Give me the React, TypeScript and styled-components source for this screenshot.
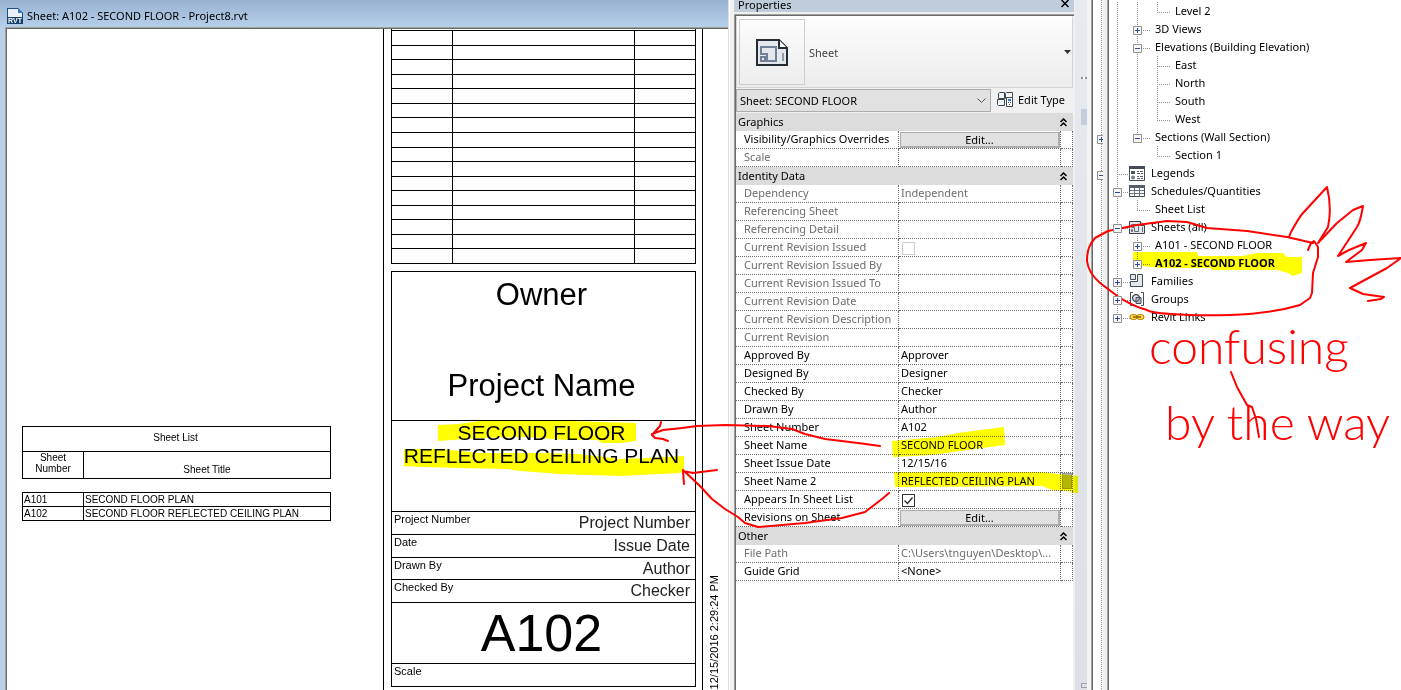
import React from 'react';
import styled, { createGlobalStyle, css } from 'styled-components';

const GlobalStyle = createGlobalStyle`
  *, *::before, *::after { box-sizing: border-box; }
  body {
    margin: 0;
    background: #f0f0f0;
    color: #000;
    font-family: "Noto Sans", "Open Sans", sans-serif;
    font-size: 11px;
    line-height: 18px;
  }
  button, select, input { font: inherit; color: inherit; margin: 0; }
`;

const drawingFont = '"Liberation Sans", Arial, sans-serif';

const dotsDown = 'repeating-linear-gradient(to bottom, #8c8c8c 0 1px, transparent 1px 2px)';
const dotsAcross = 'repeating-linear-gradient(to right, #8c8c8c 0 1px, transparent 1px 2px)';

/* ---------- shell ---------- */

const Workspace = styled.main`
  position: relative;
  display: flex;
  height: 100vh;
  min-width: 1100px;
  overflow: hidden;
`;

/* ---------- sheet view window ---------- */

const ViewWindow = styled.section`
  flex: 1;
  min-width: 0;
  display: flex;
  flex-direction: column;
  background: #bad0e9;
`;

const TitleBar = styled.header`
  display: flex;
  align-items: center;
  gap: 4px;
  height: 27px;
  flex: none;
  padding: 4px 0 0 7px;
  background: linear-gradient(#98b2d0, #b6cfea);
`;

const WindowTitle = styled.h1`
  margin: 0;
  font-size: 11px;
  font-weight: 400;
`;

const Canvas = styled.div`
  flex: 1;
  display: flex;
  margin-left: 5px;
  border: solid #a0a0a0;
  border-width: 1px 0 0 1px;
  box-shadow: inset 1px 1px #696969;
  padding: 1px 0 0 1px;
  background: #fff;
  font-family: ${drawingFont};
  overflow: hidden;
`;

const ScheduleArea = styled.div`
  flex: 1;
  min-width: 0;
  padding: 397px 0 0 15px;
`;

const Schedule = styled.table`
  width: 309px;
  margin-bottom: 13px;
  border-collapse: collapse;
  table-layout: fixed;
  font-size: 10px;
  line-height: 11px;
  th, td { border: 1px solid #000; font-weight: 400; }
`;

const TitleCell = styled.th`
  height: 25px;
  padding: 0 2px 3px 0;
`;

const HeadCell = styled.th`
  height: 27px;
  padding: 0 4px;
  vertical-align: ${(p: { $low?: boolean }) => (p.$low ? 'bottom' : 'top')};
  padding-bottom: ${(p: { $low?: boolean }) => (p.$low ? '3px' : '0')};
`;

const DataCell = styled.td`
  height: 14px;
  padding: 0 1px 1px;
`;

const SheetBorder = styled.div`
  width: 320px;
  flex: none;
  padding: 0 6px 0 7px;
  border: solid #000;
  border-width: 0 1px;
`;

const RevisionGrid = styled.div`
  display: flex;
  flex-direction: column;
  height: 235px;
  margin-bottom: 7px;
  padding-top: 1px;
  border: solid #000;
  border-width: 0 1px 1px;
`;

const RevisionRow = styled.div`
  flex: 1;
  display: grid;
  grid-template-columns: 60px 1fr 60px;
  border-top: 1px solid #000;
  span:nth-child(2) { border: solid #000; border-width: 0 1px; }
`;

const TitleBlock = styled.div`
  border: solid #000;
  border-width: 1px 1px 0;
`;

const blockCell = css`
  border-bottom: 1px solid #000;
`;

const ProjectCell = styled.div`
  ${blockCell}
  display: flex;
  flex-direction: column;
  align-items: center;
  justify-content: space-between;
  height: 149px;
  padding: 5px 4px 16px 0;
  font-size: 31px;
  line-height: 36px;
`;

const SheetNameCell = styled.div`
  ${blockCell}
  height: 91px;
  padding-right: 4px;
  font-size: 21px;
  line-height: 23px;
  text-align: center;
`;

const FieldStack = styled.div`
  display: flex;
  flex-direction: column;
  height: 91px;
`;

const FieldCell = styled.div`
  ${blockCell}
  flex: 1;
  display: flex;
  justify-content: space-between;
  min-height: 22px;
  padding: 0 5px 0 2px;
  font-size: 11px;
  line-height: 15px;
  span { font-size: 16px; line-height: 22px; color: #222; }
`;

const NumberCell = styled.div`
  ${blockCell}
  height: 61px;
  padding-right: 4px;
  font-size: 52px;
  line-height: 60px;
  text-align: center;
`;

const ScaleCell = styled.div`
  ${blockCell}
  height: 23px;
  padding-left: 2px;
  font-size: 11px;
  line-height: 15px;
`;

const PlotStamp = styled.div`
  width: 25px;
  flex: none;
  display: flex;
  align-items: flex-end;
  padding: 0 0 1px 4px;
  time {
    writing-mode: vertical-rl;
    rotate: 180deg;
    font-size: 11px;
    line-height: 14px;
    white-space: nowrap;
  }
`;

/* ---------- properties palette ---------- */

const Palette = styled.section`
  width: 347px;
  flex: none;
  display: flex;
  flex-direction: column;
  padding: 0 1px 0 5px;
  border-left: 1px solid #dcdcdc;
  box-shadow: inset 1px 0 #fff;
  background: #f0f0f0;
`;

const PaletteBar = styled.header`
  display: flex;
  justify-content: space-between;
  align-items: flex-end;
  height: 12px;
  flex: none;
  margin-bottom: 2px;
  padding: 0 5px 0 4px;
  background: #bfcddb;
  h2 { margin: 0; font-size: 11px; line-height: 15px; font-weight: 400; }
`;

const CloseButton = styled.button`
  display: flex;
  padding: 0;
  border: 0;
  background: none;
`;

const PaletteBody = styled.div`
  flex: 1;
  border: solid #a0a0a0;
  border-width: 1px 0 0 1px;
  box-shadow: inset 1px 1px #696969;
  padding: 1px 1px 0 1px;
`;

const TypeSelector = styled.button`
  display: flex;
  align-items: center;
  gap: 4px;
  width: 100%;
  height: 72px;
  padding: 0 1px 0 2px;
  border: 1px solid #d4d4d4;
  border-top-color: #fff;
  background: linear-gradient(#fdfdfd, #ececec);
  color: #444;
  text-align: left;
  strong { flex: 1; padding-top: 2px; font-weight: 400; }
`;

const Thumb = styled.span`
  display: flex;
  align-items: center;
  justify-content: center;
  width: 66px;
  height: 66px;
  border: 1px solid #cdcdcd;
`;

const InstanceBar = styled.div`
  display: flex;
  align-items: center;
  gap: 6px;
  height: 25px;
`;

const InstanceField = styled.div`
  position: relative;
  width: 255px;
  svg { position: absolute; right: 5px; top: 9px; pointer-events: none; }
`;

const InstanceSelect = styled.select`
  appearance: none;
  width: 100%;
  height: 23px;
  padding: 0 20px 0 3px;
  border: 1px solid #adadad;
  border-radius: 0;
  background: #e1e1e1;
`;

const EditTypeButton = styled.button`
  display: flex;
  align-items: center;
  align-self: flex-start;
  gap: 4px;
  height: 23px;
  padding: 0;
  border: 0;
  background: none;
  white-space: nowrap;
`;

const GridArea = styled.div`
  height: 100%;
  background: #fff;
`;

const PropertyGrid = styled.table`
  width: 337px;
  table-layout: fixed;
  border-collapse: separate;
  border-spacing: 0;
  td, th { padding: 0; height: 18px; line-height: 16px; font-weight: 400; text-align: left; white-space: nowrap; }
`;

const GroupHead = styled.th`
  background: #dcdcdc;
  div { display: flex; justify-content: space-between; align-items: center; padding: 0 6px 0 2px; }
  button { display: flex; padding: 0; border: 0; background: none; }
`;

const PropertyRow = styled.tr<{ $dim?: boolean }>`
  color: ${(p) => (p.$dim ? '#6d6d6d' : '#000')};
  td, th { border: dotted #6d6d6d; border-width: 0 1px 1px 0; vertical-align: top; }
  th { padding-left: 8px; }
  td { padding-left: 2px; }
`;

const ButtonCell = styled.td`
  && { padding: 1px 0 0 1px; }
`;

const EditButton = styled.button`
  display: block;
  width: 100%;
  height: 16px;
  padding: 0;
  border: 1px solid #adadad;
  border-width: 1px 2px 2px 1px;
  background: #e1e1e1;
  line-height: 13px;
`;

const MiniButton = styled.button`
  display: block;
  width: 10px;
  height: 16px;
  margin-left: -1px;
  padding: 0;
  border: 1px solid #999;
  background: #b4b4b4;
`;

const Tick = styled.input`
  appearance: none;
  display: block;
  width: 13px;
  height: 13px;
  margin: 3px 0 0 1px;
  border: 1px solid #333;
  background: #fff;
  &:disabled { border-color: #ccc; }
  &:checked {
    background: url("data:image/svg+xml,%3Csvg xmlns='http://www.w3.org/2000/svg' viewBox='0 0 11 11'%3E%3Cpath d='M1.5 5.5l3 3 5-6' fill='none' stroke='%23222' stroke-width='1.2'/%3E%3C/svg%3E");
  }
`;

/* ---------- splitter and clipped pane ---------- */

const Splitter = styled.div`
  display: flex;
  flex-direction: column;
  align-items: flex-end;
  width: 16px;
  flex: none;
  padding: 77px 0 2px;
  border-right: 4px solid #f4f4f4;
  background: linear-gradient(#e7eaef, #dfe3e9 60%, #dde1e7);
`;

const Dashes = styled.i`
  width: 6px;
  height: 2px;
  margin-bottom: 30px;
  background: repeating-linear-gradient(to right, #909090 0 2px, #fff 2px 4px);
`;

const Thumbnail = styled.i`
  width: 6px;
  height: 16px;
  margin-bottom: auto;
  background: #c5cfdc;
`;

const Grip = styled.i`
  width: 6px;
  height: 5px;
  border: 1px solid #98a0aa;
  border-right: 0;
`;

const ClippedPane = styled.div`
  width: 16px;
  flex: none;
  display: flex;
  flex-direction: column;
  align-items: flex-end;
  gap: 27px;
  padding: 135px 4px 0 0;
  border: solid #a0a0a0;
  border-width: 0 0 0 1px;
  background: ${dotsDown} 9px 0 / 1px 100% no-repeat, linear-gradient(to right, #696969 1px, #fff 1px 11px, #f0f0f0 11px);
  span { width: 6px; height: 9px; overflow: hidden; }
  svg { display: block; }
`;

/* ---------- project browser ---------- */

const Browser = styled.aside`
  width: 294px;
  flex: none;
  border: solid #a0a0a0;
  border-width: 0 0 0 1px;
  box-shadow: inset 1px 0 #696969;
  padding: 2px 0 0 1px;
  background: #fff;
`;

const Tree = styled.ul`
  margin: 0;
  padding: 0;
  list-style: none;
`;

const TreeRow = styled.li<{ $bold?: boolean }>`
  display: flex;
  height: 18px;
  white-space: nowrap;
  font-weight: ${(p) => (p.$bold ? 700 : 400)};
  > svg { flex: none; margin-top: 1px; background: #fff; }
  > b { font-weight: inherit; padding-left: 6px; }
`;

type GuideKind = 'none' | 'line' | 'tee' | 'end';

const Guide = styled.span<{ $kind: GuideKind }>`
  position: relative;
  width: 20px;
  flex: none;
  background: ${(p) =>
    p.$kind === 'none'
      ? 'none'
      : p.$kind === 'end'
      ? `${dotsDown} 8px 0 / 1px 10px no-repeat`
      : `${dotsDown} 8px 0 / 1px 100% no-repeat`};
  &::after {
    content: '';
    display: ${(p) => (p.$kind === 'tee' || p.$kind === 'end' ? 'block' : 'none')};
    position: absolute;
    left: 8px;
    top: 10px;
    width: 14px;
    height: 1px;
    background: ${dotsAcross};
  }
  svg { position: absolute; z-index: 1; left: 4px; top: 6px; }
`;

const Remarks = styled.div`
  display: flex;
  flex-direction: column;
  gap: 36px;
  color: #f00;
  font-family: Lato, sans-serif;
  font-weight: 300;
  font-size: 48px;
  line-height: 40px;
  white-space: nowrap;
  p { margin: 0; padding-left: 40px; }
  p + p { padding-left: 56px; }
`;

const Markup = styled.svg<{ $blend?: boolean }>`
  position: absolute;
  top: 0;
  right: 0;
  width: 1024px;
  height: 690px;
  pointer-events: none;
  mix-blend-mode: ${(p) => (p.$blend ? 'multiply' : 'normal')};
`;

/* ---------- icons ---------- */

const RvtIcon = () => (
  <svg width="16" height="16" viewBox="0 0 16 16" aria-hidden="true">
    <path d="M0 0h11l5 5v11H0z" fill="#1c4f8c" />
    <path d="M1 1h10v4h4v4H1z" fill="#e9eff7" />
    <path d="M11 0l5 5h-5z" fill="#2f7cc4" />
    <path d="M0 9h16v7H0z" fill="#17406f" />
    <text x="8" y="15" fontSize="7" fontWeight="700" fontFamily="Liberation Sans" fill="#fff" textAnchor="middle">RVT</text>
  </svg>
);

const SheetIconLarge = () => (
  <svg width="32" height="32" viewBox="0 0 32 32" aria-hidden="true">
    <path d="M1 4h22l8 8v17H1z" fill="#e4e8ec" stroke="#262c33" strokeWidth="2" />
    <path d="M23 4v8h8" fill="#fff" stroke="#262c33" strokeWidth="2" />
    <path d="M5 17v-6h15v14h-9v-7H4M5 21h4v4H5z" fill="none" stroke="#718096" strokeWidth="2" />
    <path d="M27 17v8" stroke="#9199a3" strokeWidth="2" />
  </svg>
);

const SheetIcon = () => (
  <svg width="16" height="16" viewBox="0 0 16 16" fill="none" aria-hidden="true">
    <path d="M.5 2.500h11l4 4v8H.5z" fill="#e4e8ec" stroke="#3a414c" />
    <path d="M11.500 2.500v4h4" fill="#fff" stroke="#3a414c" />
    <path d="M2.500 8V5.500h7v7h-4V8.500h-3M2.500 10.500h1v2h-1z" stroke="#5f6c80" />
    <path d="M13.500 8v5" stroke="#5f6c80" />
  </svg>
);

const EditTypeIcon = () => (
  <svg width="17" height="17" viewBox="0 0 17 17" fill="#f4f6f8" stroke="#3d4654" aria-hidden="true">
    <path d="M1.500 2.500l1-1h5v6h-6zM8.500 2.500l1-1h6v6h-7zM.5 8.500h7v6h-6l-1-1z" />
    <path d="M9.500 6.500h6v9h-6z" fill="#fff" />
    <path d="M11 9h3" stroke="#2c6fbf" strokeWidth="2" />
    <path d="M11 11.500h1M13 11.500h1M12 13.500h1" />
  </svg>
);

const LegendIcon = () => (
  <svg width="16" height="16" viewBox="0 0 16 16" aria-hidden="true">
    <path d="M.5 1.500h15v14H.5z" fill="#fff" stroke="#444b57" />
    <path d="M0 1h16v3H0z" fill="#444b57" />
    <path d="M2 6h4v3H2z" fill="#4c5666" />
    <circle cx="4" cy="12.500" r="2" fill="#77808d" />
    <path d="M8 6.500h2m1 0h3M8 8.500h3m1 0h2M8 11.500h2m1 0h3M8 13.500h3m1 0h2" stroke="#555e6c" />
  </svg>
);

const ScheduleIcon = () => (
  <svg width="16" height="16" viewBox="0 0 16 16" aria-hidden="true">
    <path d="M.5 2.500h15v11H.5z" fill="#fff" stroke="#444b57" />
    <path d="M0 2h16v3H0z" fill="#555e6c" />
    <path d="M1 7.500h14M1 10.500h14M5.500 5v8M10.500 5v8" stroke="#6a7380" />
  </svg>
);

const FamilyIcon = () => (
  <svg width="16" height="16" viewBox="0 0 16 16" fill="#e4e8ee" stroke="#444b57" aria-hidden="true">
    <path d="M1.500 1.500h5v5h-5zM8.500 1.500h5v12h-12v-5h7z" />
  </svg>
);

const GroupIcon = () => (
  <svg width="16" height="16" viewBox="0 0 16 16" fill="none" stroke="#444b57" aria-hidden="true">
    <path d="M4 1.500H1.500v13H4M12 1.500h2.500v13H12" />
    <circle cx="7" cy="7" r="3.500" fill="#dfe4ea" />
    <path d="M7 6.500h5v6H7z" fill="#b9c1cc" />
    <circle cx="7" cy="7" r="3.500" />
  </svg>
);

const LinkIcon = () => (
  <svg width="16" height="16" viewBox="0 0 16 16" fill="none" stroke="#b57e00" aria-hidden="true">
    <rect x="1" y="5.500" width="7" height="5" rx="2.500" fill="#ffd84a" />
    <rect x="8" y="5.500" width="7" height="5" rx="2.500" fill="#ffd84a" />
    <path d="M4 8h8" stroke="#8d6100" strokeWidth="1.500" />
  </svg>
);

const Expander = ({ open }: { open?: boolean }) => (
  <svg width="9" height="9" viewBox="0 0 9 9" aria-hidden="true">
    <path d="M.5.5h8v8h-8z" fill="#f6f6f6" stroke="#919191" />
    <path d={open ? 'M2 4.500h5' : 'M2 4.500h5M4.500 2v5'} stroke="#31479c" />
  </svg>
);

const Collapse = () => (
  <svg width="7" height="9" viewBox="0 0 7 9" fill="none" stroke="#000" strokeWidth="1.500" aria-hidden="true">
    <path d="M.5 4l3-3 3 3M.5 8l3-3 3 3" />
  </svg>
);

/* ---------- data ---------- */

type Prop = {
  name: string;
  value?: string;
  dim?: boolean;
  kind?: 'button' | 'check' | 'browse';
  checked?: boolean;
};

const groups: { title: string; rows: Prop[] }[] = [
  {
    title: 'Graphics',
    rows: [
      { name: 'Visibility/Graphics Overrides', kind: 'button' },
      { name: 'Scale', dim: true },
    ],
  },
  {
    title: 'Identity Data',
    rows: [
      { name: 'Dependency', value: 'Independent', dim: true },
      { name: 'Referencing Sheet', dim: true },
      { name: 'Referencing Detail', dim: true },
      { name: 'Current Revision Issued', kind: 'check', dim: true },
      { name: 'Current Revision Issued By', dim: true },
      { name: 'Current Revision Issued To', dim: true },
      { name: 'Current Revision Date', dim: true },
      { name: 'Current Revision Description', dim: true },
      { name: 'Current Revision', dim: true },
      { name: 'Approved By', value: 'Approver' },
      { name: 'Designed By', value: 'Designer' },
      { name: 'Checked By', value: 'Checker' },
      { name: 'Drawn By', value: 'Author' },
      { name: 'Sheet Number', value: 'A102' },
      { name: 'Sheet Name', value: 'SECOND FLOOR' },
      { name: 'Sheet Issue Date', value: '12/15/16' },
      { name: 'Sheet Name 2', value: 'REFLECTED CEILING PLAN', kind: 'browse' },
      { name: 'Appears In Sheet List', kind: 'check', checked: true },
      { name: 'Revisions on Sheet', kind: 'button' },
    ],
  },
  {
    title: 'Other',
    rows: [
      { name: 'File Path', value: 'C:\\Users\\tnguyen\\Desktop\\...', dim: true },
      { name: 'Guide Grid', value: '<None>' },
    ],
  },
];

type Node = {
  label: string;
  guides: GuideKind[];
  open?: boolean;
  icon?: React.ReactNode;
  bold?: boolean;
};

const nodes: Node[] = [
  { label: 'Level 2', guides: ['line', 'line', 'end'] },
  { label: '3D Views', guides: ['line', 'tee'], open: false },
  { label: 'Elevations (Building Elevation)', guides: ['line', 'tee'], open: true },
  { label: 'East', guides: ['line', 'line', 'tee'] },
  { label: 'North', guides: ['line', 'line', 'tee'] },
  { label: 'South', guides: ['line', 'line', 'tee'] },
  { label: 'West', guides: ['line', 'line', 'end'] },
  { label: 'Sections (Wall Section)', guides: ['line', 'end'], open: true },
  { label: 'Section 1', guides: ['line', 'none', 'end'] },
  { label: 'Legends', guides: ['tee'], icon: <LegendIcon /> },
  { label: 'Schedules/Quantities', guides: ['tee'], open: true, icon: <ScheduleIcon /> },
  { label: 'Sheet List', guides: ['line', 'end'] },
  { label: 'Sheets (all)', guides: ['tee'], open: true, icon: <SheetIcon /> },
  { label: 'A101 - SECOND FLOOR', guides: ['line', 'tee'], open: false },
  { label: 'A102 - SECOND FLOOR', guides: ['line', 'end'], open: false, bold: true },
  { label: 'Families', guides: ['tee'], open: false, icon: <FamilyIcon /> },
  { label: 'Groups', guides: ['tee'], open: false, icon: <GroupIcon /> },
  { label: 'Revit Links', guides: ['end'], open: false, icon: <LinkIcon /> },
];

const titleFields = [
  ['Project Number', 'Project Number'],
  ['Date', 'Issue Date'],
  ['Drawn By', 'Author'],
  ['Checked By', 'Checker'],
];

/* ---------- parts ---------- */

const SheetView = () => (
  <ViewWindow>
    <TitleBar>
      <RvtIcon />
      <WindowTitle>Sheet: A102 - SECOND FLOOR - Project8.rvt</WindowTitle>
    </TitleBar>
    <Canvas>
      <ScheduleArea>
        <Schedule>
          <colgroup><col width="61" /><col /></colgroup>
          <thead>
            <tr><TitleCell colSpan={2}>Sheet List</TitleCell></tr>
            <tr>
              <HeadCell>Sheet Number</HeadCell>
              <HeadCell $low>Sheet Title</HeadCell>
            </tr>
          </thead>
        </Schedule>
        <Schedule>
          <colgroup><col width="61" /><col /></colgroup>
          <tbody>
            <tr><DataCell>A101</DataCell><DataCell>SECOND FLOOR PLAN</DataCell></tr>
            <tr><DataCell>A102</DataCell><DataCell>SECOND FLOOR REFLECTED CEILING PLAN</DataCell></tr>
          </tbody>
        </Schedule>
      </ScheduleArea>
      <SheetBorder>
        <RevisionGrid>
          {Array.from({ length: 16 }, (_, i) => (
            <RevisionRow key={i}><span /><span /><span /></RevisionRow>
          ))}
        </RevisionGrid>
        <TitleBlock>
          <ProjectCell><span>Owner</span><span>Project Name</span></ProjectCell>
          <SheetNameCell>SECOND FLOOR<br />REFLECTED CEILING PLAN</SheetNameCell>
          <FieldStack>
            {titleFields.map(([label, value]) => (
              <FieldCell key={label}>{label}<span>{value}</span></FieldCell>
            ))}
          </FieldStack>
          <NumberCell>A102</NumberCell>
          <ScaleCell>Scale</ScaleCell>
        </TitleBlock>
      </SheetBorder>
      <PlotStamp><time>12/15/2016 2:29:24 PM</time></PlotStamp>
    </Canvas>
  </ViewWindow>
);

const PropertyLine = ({ row }: { row: Prop }) => {
  const id = row.name.replace(/\W+/g, '-').toLowerCase();
  return (
    <PropertyRow $dim={row.dim}>
      <th scope="row">{row.kind === 'check' ? <label htmlFor={id}>{row.name}</label> : row.name}</th>
      {row.kind === 'button' ? (
        <ButtonCell><EditButton aria-label={`Edit ${row.name}`}>Edit...</EditButton></ButtonCell>
      ) : (
        <td>
          {row.kind === 'check' ? (
            <Tick type="checkbox" id={id} defaultChecked={row.checked} disabled={row.dim} />
          ) : (
            row.value
          )}
        </td>
      )}
      <td>{row.kind === 'browse' && <MiniButton aria-label="Associate parameter" />}</td>
    </PropertyRow>
  );
};

const PropertiesPalette = () => (
  <Palette>
    <PaletteBar>
      <h2>Properties</h2>
      <CloseButton aria-label="Close">
        <svg width="8" height="12" viewBox="0 0 8 12" stroke="#000" strokeWidth="1.500">
          <path d="M.5 0l7 7M7.500 0l-7 7" />
        </svg>
      </CloseButton>
    </PaletteBar>
    <PaletteBody>
      <TypeSelector>
        <Thumb><SheetIconLarge /></Thumb>
        <strong>Sheet</strong>
        <svg width="7" height="4" viewBox="0 0 7 4"><path d="M0 0h7L3.500 4z" fill="#333" /></svg>
      </TypeSelector>
      <InstanceBar>
        <InstanceField>
          <InstanceSelect aria-label="Instance">
            <option>Sheet: SECOND FLOOR</option>
          </InstanceSelect>
          <svg width="9" height="6" viewBox="0 0 9 6" fill="none" stroke="#555"><path d="M.5.5l4 4 4-4" /></svg>
        </InstanceField>
        <EditTypeButton><EditTypeIcon />Edit Type</EditTypeButton>
      </InstanceBar>
      <GridArea>
        <PropertyGrid>
          <colgroup><col width="163" /><col width="162" /><col width="12" /></colgroup>
          {groups.map((group) => (
            <tbody key={group.title}>
              <tr>
                <GroupHead colSpan={3} scope="rowgroup">
                  <div>{group.title}<button aria-label={`Collapse ${group.title}`}><Collapse /></button></div>
                </GroupHead>
              </tr>
              {group.rows.map((row) => <PropertyLine key={row.name} row={row} />)}
            </tbody>
          ))}
        </PropertyGrid>
      </GridArea>
    </PaletteBody>
  </Palette>
);

const ProjectBrowser = () => (
  <Browser>
    <Tree>
      {nodes.map((node) => (
        <TreeRow key={node.label} $bold={node.bold}>
          {node.guides.map((kind, i) => (
            <Guide key={i} $kind={kind}>
              {i === node.guides.length - 1 && node.open !== undefined && <Expander open={node.open} />}
            </Guide>
          ))}
          {node.icon}
          <b>{node.label}</b>
        </TreeRow>
      ))}
    </Tree>
    <Remarks>
      <p>confusing</p>
      <p>by the way</p>
    </Remarks>
  </Browser>
);

export default function App() {
  return (
    <>
      <GlobalStyle />
      <Workspace>
        <SheetView />
        <PropertiesPalette />
        <Splitter><Dashes /><Thumbnail /><Grip /></Splitter>
        <ClippedPane>
          <span><Expander /></span>
          <span><Expander open /></span>
        </ClippedPane>
        <ProjectBrowser />
        <Markup $blend viewBox="377 0 1024 690" fill="#ff0" aria-hidden="true">
          <path d="M438 425l20-1 22-3h90l66 2v18l-16 2h-18l-4-3h-32l-40-3-46 1-42 3z" />
          <path d="M404 449h36l40 4h60l40 1 40 5 26-1 38-2v14l-4 3-60 3-60-2-39-3-14-2-47-1-37-1-19-1z" />
          <path d="M892 441l46-4 20-4 46-6 1 18-23 3-50 7-39 2z" />
          <path d="M894 472h146l18 2 20 2v17h-6l-2-2-18-1-10-4-147 1z" />
          <path d="M1133 252h64l1 4h45l14-3h26l4 4h15v16l-9 3-5-3-11-3h-64l-3-2h-50l-27-3z" />
        </Markup>
        <Markup viewBox="377 0 1024 690" fill="none" stroke="#f00" strokeWidth="2" strokeLinejoin="round" strokeLinecap="round" aria-hidden="true">
          <path d="M880 446l-22-3-33-4-20-5-13-5-24-3-43-1L697 426l-15 2-19 2-11 4M661 422l-1 4-8 9 3 3 8 1 5 2" />
          <path d="M889 493l-7 6-17 13-23 6-37 5-47 4-13-4-7-6-13-8-13-10-12-13-17-16M684 484l-1-13 10 2 24-3" />
          <path d="M1308 250l3-7 3-2 4 6v10l-5 16-1 20-2 5-10 7c-20 6-40 9-70 10-50 1-80-2-83-5-12-3-20-8-27-12l-20-15c-8-7-12-14-13-22 0-12 3-17 8-23l13-7 29-6 30-4 20 1 20 6 40 3 40 6 26 6" />
          <path d="M1289 237l2-5c5-9 9-16 12-19l24-26c3 12 4 26 1 40l-10 16 19-20 16-13 10-4c-2 12-4 18-6 21l-19 29 11-6 17-7-4 7-16 12 24-2 31-2-14 10-37 20 13 6 21 3-3 2-13 2" />
          <path d="M1231 372l6 15 10 18 5 2 4 12 3 18" />
        </Markup>
      </Workspace>
    </>
  );
}
